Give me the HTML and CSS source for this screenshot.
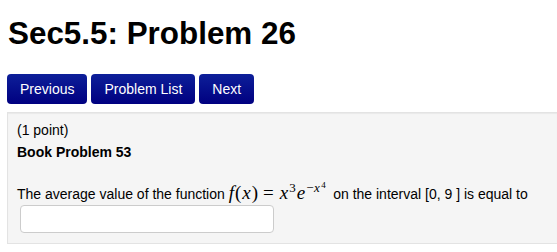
FILE: index.html
```html
<!DOCTYPE html>
<html lang="en">

<head>
    <meta charset="UTF-8">
    <meta name="viewport" content="width=device-width, initial-scale=1.0">
    <title>Sec5.5: Problem 26</title>
    <link rel="stylesheet" href="styles.css">
</head>

<body>
    <h1 class="title">Sec5.5: Problem 26</h1>

    <!-- Navigation -->
    <div class="nav">
        <a class="nav-button" href="#">Previous</a>
        <a class="nav-button" href="#">Problem List</a>
        <a class="nav-button" href="#">Next</a>
    </div>

    <!-- Problem body -->
    <div class="problem">
        <div class="points">(1 point)</div>
        <div class="book">Book Problem 53</div>

        <p class="question">
            The average value of the function
            <span class="math"><i>f</i><span class="paren">(</span><i>x</i><span class="paren">)</span><span class="eq">=</span><i>x</i><sup>3</sup><i>e</i><sup class="exp">&minus;<i>x</i><sup>4</sup></sup></span>
            on the interval [0, 9 ] is equal to
        </p>
        <input class="answer" type="text">
    </div>
</body>

</html>
```

FILE: styles.css
```css
body {
    margin: 0;
    padding: 0 0 0 7px;
    background-color: #fff;
    font-family: "Liberation Sans", Arial, sans-serif;
    color: #000;
}

.title {
    margin: 0;
    padding: 16px 0 0 1px;
    font-size: 31.4px;
    line-height: 36px;
    font-weight: bold;
}

.nav {
    margin-top: 22px;
    font-size: 0;
}

.nav-button {
    display: inline-block;
    height: 30px;
    line-height: 30px;
    padding: 0 13px;
    margin-right: 4px;
    border-radius: 4px;
    background: linear-gradient(#0d1f99, #000080);
    color: #fff;
    font-size: 14px;
    text-decoration: none;
}

.problem {
    margin-top: 8px;
    padding: 7px 10px 10px 9px;
    background-color: #f5f5f5;
    border: 1px solid #e3e3e3;
    border-right: none;
    box-shadow: inset 0 1px 1px rgba(0, 0, 0, 0.05);
    font-size: 14px;
    line-height: 20px;
}

.book {
    margin-top: 2px;
    font-weight: bold;
}

.question {
    margin: 22px 0 0 0;
    height: 20px;
    line-height: 20px;
}

.math {
    font-family: "Liberation Serif", "DejaVu Serif", serif;
    font-size: 19px;
    line-height: 0;
}

.math .paren {
    margin: 0 1px;
}

.math .eq {
    margin: 0 6px 0 4px;
}

.math sup {
    font-size: 13px;
    line-height: 0;
    vertical-align: 7px;
    margin: 0 1px 0 1px;
}

.math .exp {
    margin: 0 3px 0 1px;
    letter-spacing: 0.5px;
}

.math sup sup {
    font-size: 9px;
    vertical-align: 4px;
    margin: 0 0 0 1px;
}

.answer {
    display: block;
    box-sizing: border-box;
    width: 254px;
    height: 28px;
    margin: 1px 0 0 3px;
    border: 1px solid #ccc;
    border-radius: 4px;
    background: #fff;
}
```
